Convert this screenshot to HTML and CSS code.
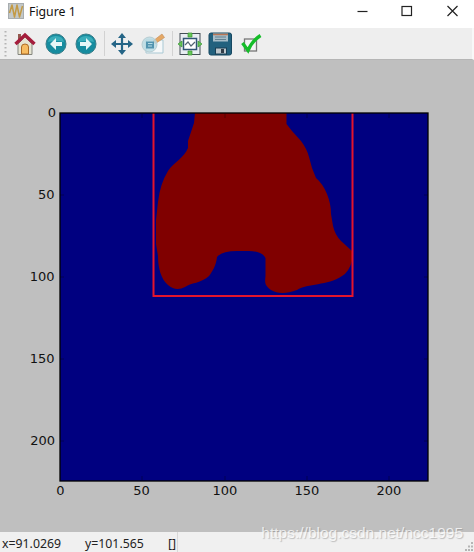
FILE: index.html
```
<!DOCTYPE html>
<html lang="en">
<head>
    <meta charset="UTF-8">
    <meta name="viewport" content="width=device-width, initial-scale=1.0">
    <title>Figure 1</title>
    <link rel="stylesheet" href="styles.css">
</head>
<body>
    <div class="window">
        <div class="titlebar">
            <svg class="app-icon" width="16" height="16" viewBox="0 0 16 16">
                <rect x=".5" y=".5" width="15" height="15" fill="#c3c8c8" stroke="#a8adb0"/>
                <path d="M1.500 10L4 2l2.500 12L9 2l2.500 12L14.500 3" fill="none" stroke="#c39a45" stroke-width="1.500" stroke-linejoin="round"/>
            </svg>
            <span class="title">Figure 1</span>
            <svg class="controls" width="117" height="28" viewBox="357 0 117 28" fill="none" stroke="#222" stroke-width="1.200">
                <path d="M357.500 11.500h10"/>
                <rect x="402" y="6.500" width="9.500" height="9"/>
                <path d="M447.500 6l10 10M457.500 6l-10 10"/>
            </svg>
        </div>
        <div class="toolbar">
            <svg class="grip" width="3" height="26" viewBox="0 0 3 26">
                <path d="M1.500 0v26" stroke="#b4b4b4" stroke-width="2" stroke-dasharray="1.500 2.500"/>
            </svg>
            <svg class="home" width="22" height="24" viewBox="0 0 22 24">
                <path d="M4 2h3v7H4z" fill="#92584e"/>
                <path d="M4 12l7-7 7 7v10.500H4z" fill="#e6e4d2" stroke="#85867e"/>
                <path d="M7.500 22v-7q0-3 3.500-3t3.500 3v7z" fill="#f7bc62" stroke="#ad6a24"/>
                <path d="M1.500 12L11 3l9.500 9" fill="none" stroke="#a51d3c" stroke-width="3.400"/>
            </svg>
            <svg class="back" width="22" height="22" viewBox="0 0 22 22">
                <circle cx="11" cy="11" r="10" fill="#168c9f" stroke="#397e8a"/>
                <path d="M3 9Q4 3 11 3t8 6q-8-2-16 0" fill="#39adba"/>
                <path d="M5 11l6-6v4h6v4h-6v4z" fill="#e5f6f7"/>
            </svg>
            <svg class="forward" width="22" height="22" viewBox="0 0 22 22">
                <circle cx="11" cy="11" r="10" fill="#168c9f" stroke="#397e8a"/>
                <path d="M3 9Q4 3 11 3t8 6q-8-2-16 0" fill="#39adba"/>
                <path d="M17 11l-6-6v4H5v4h6v4z" fill="#e5f6f7"/>
            </svg>
            <span class="separator"></span>
            <svg class="pan" width="22" height="22" viewBox="0 0 22 22">
                <path d="M11 3v16M3 11h16" stroke="#256586" stroke-width="2.200"/>
                <path d="M11 0l4 5H7zM11 22l4-5H7zM0 11l5-4v8zM22 11l-5-4v8z" fill="#256586"/>
            </svg>
            <svg class="zoom" width="24" height="24" viewBox="0 0 24 24">
                <path d="M5 8h17v13H5z" fill="#f5f8f9" stroke="#a9c9d4"/>
                <path d="M12 9l9-7 2.500 3.500-9 6z" fill="#e5a865" stroke="#c28b57" stroke-width=".6"/>
                <circle cx="8.500" cy="12.500" r="7.500" fill="#b6d9e2" fill-opacity=".8" stroke="#b7cdd2"/>
                <path d="M5 9.500h8v7H5z" fill="#5294af"/>
                <path d="M7 11.500h4.500M7 14h4" stroke="#b7dce6"/>
            </svg>
            <span class="separator"></span>
            <svg class="subplots" width="24" height="24" viewBox="0 0 24 24">
                <rect x="2" y="1.500" width="20" height="21" fill="#e8edf2" stroke="#454f57"/>
                <rect x="5.500" y="6.500" width="13" height="11" fill="#fff" stroke="#315575" stroke-width="1.500"/>
                <path d="M7 13l3-3 3 4 4-4" fill="none" stroke="#536572" stroke-width="1.200"/>
                <path d="M10 1h4v4h-4zM10 19h4v4h-4zM0 12l4-3v6zM24 12l-4-3v6z" fill="#67c957" stroke="#399335" stroke-width=".7"/>
            </svg>
            <svg class="save" width="25" height="24" viewBox="0 0 25 24">
                <rect x="1" y="1" width="22.500" height="22" rx="2" fill="#22617e" stroke="#174861"/>
                <rect x="5" y="1.500" width="15" height="8" fill="#a7bdc8"/>
                <path d="M5 2.500h15" stroke="#ba7554" stroke-width="1.500"/>
                <path d="M7 5h11M7 7.500h11" stroke="#658292"/>
                <rect x="7.500" y="16" width="11" height="6" fill="#bdc7cc" stroke="#183f55"/>
                <path d="M13 17h3v4h-3z" fill="#303c46"/>
            </svg>
            <svg class="options" width="22" height="22" viewBox="0 0 22 22">
                <rect x="3.500" y="6" width="12" height="12" fill="#f4f4f4" stroke="#777" stroke-width="1.300"/>
                <path d="M1.500 10l5.500 7.500Q11 8 19.500 2.500" fill="none" stroke="#15bd29" stroke-width="3.300"/>
            </svg>
        </div>
        <div class="canvas">
            <!-- user units are window pixels, so the plot starts at y=60 -->
            <svg class="plot" width="474" height="472" viewBox="0 60 474 472">
                <rect x="60" y="113" width="368" height="368" fill="#000080"/>
                <path fill="#800000" d="M195 113H286.500V124L292 131 301 141Q307 149 309 157L312 168 316 178Q323 184 327 194 331 204 331 214L333 226Q335 235 341 241L352 251V261Q349 272 342 276C327 286 308 283 297 290Q281 296 271 290C264 285 265 282 265.500 276V258Q262 251 249 251H237Q222 251 217 257C216 266 212 272 209 276C202 283 190 283 185 287Q176 292 168 285C161 279 158 268 158 256L156 244V220L158 202Q160 184 168 171C174 162 184 158 188 148V141L194 123Z"/>
                <path d="M153.500 113V296H352.500V113" fill="none" stroke="#e4142c" stroke-width="2"/>
                <path d="M142 114v4M225 114v4M307 114v4M389 114v4M142 480v-4M225 480v-4M307 480v-4M389 480v-4M60 195h4M60 277h4M60 359h4M60 441h4M428 195h-4M428 277h-4M428 359h-4M428 441h-4" stroke="#000" stroke-opacity=".35"/>
                <rect x="60" y="113" width="368" height="368" fill="none" stroke="#000" stroke-width="1.300"/>
                <g class="y-axis">
                    <text x="56" y="117">0</text>
                    <text x="54.500" y="199">50</text>
                    <text x="54.500" y="281">100</text>
                    <text x="54.500" y="363">150</text>
                    <text x="55" y="445">200</text>
                </g>
                <g class="x-axis">
                    <text x="60.500" y="495">0</text>
                    <text x="141.500" y="495">50</text>
                    <text x="225" y="495">100</text>
                    <text x="307" y="495">150</text>
                    <text x="389" y="495">200</text>
                </g>
            </svg>
        </div>
        <div class="statusbar">
            <span class="coord-x">x=91.0269</span>
            <span class="coord-y">y=101.565</span>
            <span class="value">[]</span>
            <svg class="resize" width="10" height="10" viewBox="0 0 10 10" fill="#b5b5b5">
                <path d="M7 0h2v2H7zM4 3.500h2v2H4zM7 3.500h2v2H7zM1 7h2v2H1zM4 7h2v2H4zM7 7h2v2H7z"/>
            </svg>
        </div>
        <div class="watermark">https://blog.csdn.net/ncc1995</div>
    </div>
</body>
</html>
```
FILE: styles.css
```
*{
    margin: 0;
    padding: 0;
    box-sizing: border-box;
}
body{
    background: #fff;
    overflow: hidden;
}
svg{
    display: block;
    flex-shrink: 0;
}
.window{
    position: relative;
    width: 474px;
    height: 552px;
    overflow: hidden;
}
.titlebar{
    display: flex;
    height: 28px;
    padding-left: 8px;
    background: #fff;
}
.app-icon{
    margin-top: 3px;
}
.title{
    margin-left: 5px;
    font: 12.3px/23px "Noto Sans", sans-serif;
    color: #111;
}
.controls{
    margin-left: auto;
}
.toolbar{
    display: flex;
    align-items: center;
    height: 32px;
    padding-left: 4px;
    background: #eee;
    border-right: 2px solid #f8f8f8;
    border-bottom: 1px solid #b5b5b5;
}
.home{
    margin-left: 7px;
}
.back{
    margin-left: 9px;
}
.forward{
    margin-left: 8px;
}
.separator{
    width: 1px;
    height: 25px;
    margin-left: 7px;
    background: #d2d2d2;
}
.pan{
    margin-left: 6px;
}
.zoom{
    margin-left: 8px;
}
.separator + .subplots{
    margin-left: 5px;
}
.save{
    margin-left: 6px;
}
.options{
    margin-left: 8px;
}
.canvas{
    height: 472px;
    background: #bfbfbf;
}
.plot text{
    font: 13px "DejaVu Sans", sans-serif;
    fill: #111;
}
.y-axis{
    text-anchor: end;
}
.x-axis{
    text-anchor: middle;
}
.statusbar{
    display: flex;
    height: 20px;
    padding-left: 2px;
    background: #f0f0f0;
    font: 12.3px/23px "Noto Sans", sans-serif;
    color: #222;
}
.coord-x{
    width: 83px;
}
.coord-y{
    width: 83px;
}
.value{
    width: 10px;
    border-right: 1px solid #d8d8d8;
}
.resize{
    margin: 10px 0 0 auto;
}
.watermark{
    position: absolute;
    right: 11px;
    bottom: 9px;
    font: 15.5px/20px "Liberation Sans", Arial, sans-serif;
    color: rgba(255, 255, 255, .75);
    text-shadow: 1px 1px 1px rgba(110, 110, 110, .4);
    white-space: nowrap;
}
```
